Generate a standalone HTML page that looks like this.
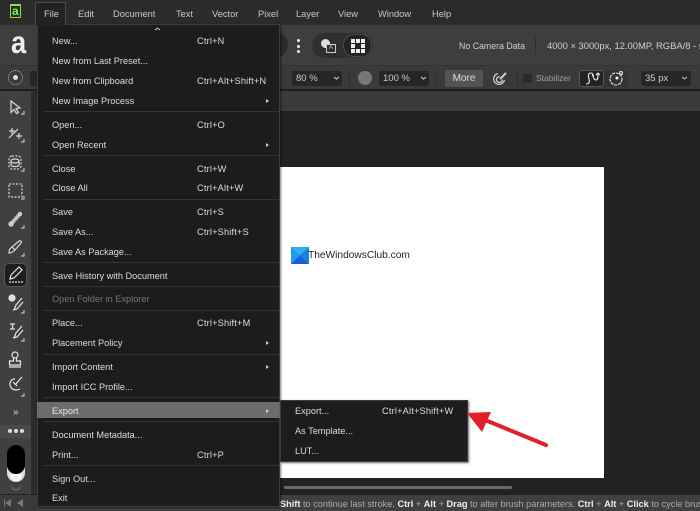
<!DOCTYPE html>
<html><head><meta charset="utf-8">
<style>
html,body{margin:0;padding:0;width:700px;height:511px;overflow:hidden;background:#222;}
body{position:relative;font-family:"Liberation Sans",sans-serif;font-size:9.2px;color:#d8d8d8;}
.a{position:absolute;}
.t{position:absolute;white-space:nowrap;line-height:12px;}
.m{position:absolute;white-space:nowrap;line-height:12px;top:8px;color:#c8c8c8;font-size:9.3px;}
.i{position:absolute;left:52px;white-space:nowrap;line-height:12px;color:#dcdcdc;font-size:9.2px;margin-top:.5px;}
.s{position:absolute;left:197px;white-space:nowrap;line-height:12px;color:#dcdcdc;font-size:9.2px;letter-spacing:.2px;margin-top:.5px;}
.l{position:absolute;left:44px;width:235px;height:1px;background:#333;}
.ar{position:absolute;left:266px;width:0;height:0;border-left:3px solid #ccc;border-top:2.5px solid transparent;border-bottom:2.5px solid transparent;margin-top:1px;}
.dd{position:absolute;background:#262626;border-radius:2px;height:15px;top:71px;color:#ccc;}
.dd span{position:absolute;left:4px;top:2px;line-height:12px;font-size:9.5px;}
svg{position:absolute;overflow:visible;}
.clip{position:absolute;overflow:hidden;white-space:nowrap;line-height:12px;}
</style></head><body>
<!-- bars -->
<div class="a" style="left:0;top:0;width:700px;height:25px;background:#2b2b2b"></div>
<div class="a" style="left:0;top:25px;width:700px;height:40px;background:#3e3e3e"></div>
<div class="a" style="left:0;top:65px;width:700px;height:25px;background:#3a3a3a;border-top:1px solid #333;box-sizing:border-box"></div>
<div class="a" style="left:0;top:89px;width:700px;height:2px;background:#1e1e1e"></div>
<div class="a" style="left:0;top:91px;width:700px;height:20px;background:#3b3b3b"></div>
<div class="a" style="left:0;top:111px;width:700px;height:384px;background:#222"></div>
<div class="a" style="left:0;top:495px;width:700px;height:16px;background:#404040"></div>
<div class="a" style="left:0;top:91px;width:31px;height:404px;background:#404040"></div>
<div class="a" style="left:31px;top:91px;width:7px;height:404px;background:#2c2c2c"></div>
<div class="a" style="left:0;top:494px;width:37px;height:17px;background:#3a3a3a;border-top:1px solid #222;box-sizing:border-box"></div>
<div class="a" style="left:30px;top:71px;width:7px;height:15px;background:#262626;border-radius:2px 0 0 2px"></div>
<!-- logos -->
<div class="a" style="left:10px;top:4px;width:11px;height:14px;background:#8fdc5a;border-radius:1px"></div>
<div class="a" style="left:11px;top:5.500px;width:9px;height:11px;background:#1f3317"></div>
<div class="t" style="left:12px;top:5px;font-size:12px;font-weight:bold;color:#9be565;">a</div>
<div class="a" style="left:11px;top:29px;height:30px;line-height:30px;font-size:26px;font-weight:bold;color:#f0f0f0;transform:scale(1.05,1.2);transform-origin:0 24px;">a</div>
<!-- menu titles -->
<div class="a" style="left:35px;top:2px;width:31px;height:23px;border:1px solid #4a4a4a;border-bottom:none;background:#222;box-sizing:border-box"></div>
<span class="m" style="left:44px">File</span>
<span class="m" style="left:78px">Edit</span>
<span class="m" style="left:113px">Document</span>
<span class="m" style="left:176px">Text</span>
<span class="m" style="left:212px">Vector</span>
<span class="m" style="left:258px">Pixel</span>
<span class="m" style="left:296px">Layer</span>
<span class="m" style="left:338px">View</span>
<span class="m" style="left:378px">Window</span>
<span class="m" style="left:432px">Help</span>
<!-- context toolbar -->
<div class="a" style="left:270px;top:32px;width:18px;height:26px;background:#2a2a2a;border-radius:0 13px 13px 0"></div>
<div class="a" style="left:297px;top:39px;width:3px;height:3px;background:#eee;border-radius:50%"></div>
<div class="a" style="left:297px;top:45px;width:3px;height:3px;background:#eee;border-radius:50%"></div>
<div class="a" style="left:297px;top:50px;width:3px;height:3px;background:#eee;border-radius:50%"></div>
<div class="a" style="left:312px;top:33px;width:61px;height:25px;background:#2f2f2f;border-radius:13px"></div>
<div class="a" style="left:343px;top:34px;width:29px;height:23px;background:#222;border:1px solid #4c4c4c;border-radius:11px;box-sizing:border-box"></div>
<div class="a" style="left:321px;top:39px;width:9px;height:9px;background:#ddd;border-radius:50%"></div>
<div class="a" style="left:326px;top:44px;width:10px;height:9px;background:#2f2f2f;border:1px solid #ccc;box-sizing:border-box;color:#ccc;font-size:6px;line-height:7px;text-align:center">A</div>
<svg style="left:0;top:0" width="700" height="511"><g fill="#eee">
<rect x="351" y="39" width="4" height="4"/><rect x="356" y="39" width="4" height="4"/><rect x="361" y="39" width="4" height="4"/>
<rect x="351" y="44" width="4" height="4"/><rect x="361" y="44" width="4" height="4"/>
<rect x="351" y="49" width="4" height="4"/><rect x="356" y="49" width="4" height="4"/><rect x="361" y="49" width="4" height="4"/></g></svg>
<span class="t" style="left:459px;top:40px;color:#cfcfcf;font-size:8.800px">No Camera Data</span>
<div class="a" style="left:535px;top:37px;width:1px;height:17px;background:#2e2e2e"></div>
<span class="clip" style="left:547px;top:40px;width:153px;color:#cfcfcf;font-size:9.400px">4000 × 3000px, 12.00MP, RGBA/8 - sRGB IEC61966-2.1</span>
<!-- second toolbar -->
<div class="a" style="left:8px;top:70px;width:15px;height:15px;border:1px dotted #bbb;border-radius:50%;box-sizing:border-box"></div>
<div class="a" style="left:13px;top:75px;width:5px;height:5px;background:#ddd;border-radius:50%"></div>
<div class="dd" style="left:292px;width:50px"><span>80 %</span></div>
<div class="a" style="left:349px;top:70px;width:1px;height:17px;background:#2e2e2e"></div>
<div class="a" style="left:358px;top:71px;width:14px;height:14px;background:#777;border-radius:50%"></div>
<div class="dd" style="left:379px;width:50px"><span>100 %</span></div>
<div class="a" style="left:436px;top:70px;width:1px;height:17px;background:#2e2e2e"></div>
<div class="a" style="left:445px;top:70px;width:38px;height:17px;background:#535353;border-radius:2px;text-align:center;line-height:17px;color:#ddd;font-size:10px">More</div>
<svg style="left:0;top:0" width="700" height="511" fill="none" stroke="#ccc" stroke-width="1.300">
<path d="M498 73.500a5.500 5.500 0 1 0 6.500 6.500M499.500 76.500a3 3 0 1 0 3 3"/><path d="M500 79l6-6" stroke-width="2"/></svg>
<div class="a" style="left:517px;top:70px;width:1px;height:17px;background:#2e2e2e"></div>
<div class="a" style="left:523px;top:74px;width:9px;height:9px;background:#2a2a2a"></div>
<span class="t" style="left:536px;top:72px;color:#a0a0a0;font-size:8.500px">Stabilizer</span>
<div class="a" style="left:579px;top:70px;width:25px;height:17px;background:#222;border:1px solid #555;border-radius:3px;box-sizing:border-box"></div>
<div class="a" style="left:604px;top:70px;width:24px;height:17px;background:#333;border-radius:0 3px 3px 0"></div>
<svg style="left:0;top:0" width="700" height="511" fill="none" stroke="#eee" stroke-width="1.100">
<path d="M586 84c3 0 4-2 3-5s-1-6 2-6c2 0 2 2 1 3M593 74c0 3 1 6 3 6 2 0 2-3 2-6M596 75l2-2 2 2"/>
<circle cx="616" cy="79" r="6" stroke-dasharray="3 1"/><circle cx="621" cy="73" r="1.500" fill="#333"/><circle cx="617" cy="78" r="1" fill="#eee"/>
<path d="M334 77l2.500 2 2.500-2M421 77l2.500 2 2.500-2" stroke="#ccc"/></svg>
<div class="dd" style="left:641px;width:50px"><span>35 px</span></div>
<svg style="left:0;top:0" width="700" height="511" fill="none" stroke="#ccc" stroke-width="1">
<path d="M682 77l2.500 2 2.500-2"/></svg>
<!-- left tools -->
<svg style="left:0;top:0" width="36" height="511" fill="none" stroke="#d8d8d8" stroke-width="1.200">
<path d="M11 101l9 7-4 .5 2.500 4-2 1-2.500-4-3 3z"/><path d="M24 111v3h-3M24 139v3h-3M24 168v3h-3M24 196v3h-3M24 225v3h-3M24 253v3h-3M24 310v3h-3M24 338v3h-3M24 393v3h-3" stroke-width="1"/>
<path d="M9 138l9-9M9 131h6M12 128v6M16 136h6M19 133v6"/>
<rect x="9" y="156" width="12" height="13" rx="3" stroke-dasharray="2 1.500"/><ellipse cx="15" cy="161" rx="4" ry="2"/><path d="M11 161v4c0 2 8 2 8 0v-4"/>
<rect x="9" y="184" width="13" height="13" stroke-dasharray="2 1.500"/>
<path d="M10 225l10-11" stroke="#aaa" stroke-width="4"/><path d="M10 225l11-12"/><circle cx="11" cy="224" r="2"/><circle cx="20" cy="214" r="1.500"/>
<path d="M12 247l7-6c2-1 3 1 2 2l-6 7zM12 247c-2 1-3 3-3 6 2 0 4-1 6-3"/>
</svg>
<div class="a" style="left:4px;top:263px;width:23px;height:24px;background:#1d1d1d;border:1px solid #555;border-radius:5px;box-sizing:border-box"></div>
<svg style="left:0;top:0" width="36" height="511" fill="none" stroke="#e6e6e6" stroke-width="1.200">
<path d="M10 279l1-4 8-8 3 3-8 8z"/><path d="M9 282h14" stroke-dasharray="2 1"/>
<circle cx="12" cy="298" r="3" fill="#ddd"/><path d="M14 310l2-5 6-7M13 310l4-1 6-7"/>
<path d="M10 324h5M12.500 324v5M10 329h5M14 338l2-5 6-7M13 338l4-1 6-7"/>
<circle cx="15" cy="355" r="3"/><path d="M13.500 358v3h-4v4h11v-4h-4v-3M9 367h12"/>
<path d="M10 385a5 5 0 0 1 5-6M10 385c1 5 6 6 10 4M15 385l7-8M13 382l4 4"/>
</svg>
<div class="t" style="left:13px;top:407px;color:#ddd;font-size:10px">»</div>
<div class="a" style="left:0;top:425px;width:31px;height:13px;background:#4a4a4a"></div>
<div class="a" style="left:8px;top:429px;width:4px;height:4px;background:#ddd;border-radius:50%"></div>
<div class="a" style="left:14px;top:429px;width:4px;height:4px;background:#ddd;border-radius:50%"></div>
<div class="a" style="left:20px;top:429px;width:4px;height:4px;background:#ddd;border-radius:50%"></div>
<div class="a" style="left:7px;top:460px;width:18px;height:22px;background:#ddd;border-radius:9px"></div>
<div class="a" style="left:7px;top:445px;width:18px;height:29px;background:#000;border-radius:9px"></div>
<div class="a" style="left:10px;top:474px;width:12px;height:7px;background:#f8f8f8;border-radius:0 0 7px 7px"></div>
<svg style="left:0;top:0" width="36" height="511" fill="#777" stroke="none">
<path d="M12 487a4 3 0 0 0 8 0" fill="none" stroke="#777"/>
<path d="M5 503l6-4v8zM4 499h1v8h-1zM17 503l6-4v8z"/></svg>
<!-- canvas doc -->
<div class="a" style="left:280px;top:167px;width:324px;height:311px;background:#fff"></div>
<svg style="left:291px;top:247px" width="18" height="17"><rect width="18" height="17" fill="#1e9bea"/><path d="M0 0l9 8.500L18 0z" fill="#2bb0f0"/><path d="M0 17l9-8.500 9 8.500z" fill="#1560d8"/><path d="M18 0L9 8.500l9 8.500z" fill="#1a82e0"/></svg>
<span class="t" style="left:308px;top:250px;color:#222;font-size:10.200px">TheWindowsClub.com</span>
<div class="a" style="left:284px;top:486px;width:228px;height:3px;background:#6a6a6a;border-radius:2px"></div>
<!-- status -->
<div class="clip" style="left:280px;top:498px;width:420px;color:#a9a9a9;font-size:9.200px"><b style="color:#eee">Shift</b> to continue last stroke. <b style="color:#eee">Ctrl</b> + <b style="color:#eee">Alt</b> + <b style="color:#eee">Drag</b> to alter brush parameters. <b style="color:#eee">Ctrl</b> + <b style="color:#eee">Alt</b> + <b style="color:#eee">Click</b> to cycle brush</div>
<!-- file menu -->
<div class="a" style="left:37px;top:24px;width:243px;height:483px;background:#1c1c1c;border:1px solid #3c3c3c;box-sizing:border-box;box-shadow:1px 1px 2px rgba(0,0,0,.5)"></div>
<div class="a" style="left:36px;top:23px;width:29px;height:3px;background:#222"></div>
<svg style="left:0;top:0" width="280" height="40" fill="none" stroke="#ccc"><path d="M155 30l2.500-2 2.500 2"/></svg>
<span class="i" style="top:34px">New...</span><span class="s" style="top:34px">Ctrl+N</span>
<span class="i" style="top:54px">New from Last Preset...</span>
<span class="i" style="top:74px">New from Clipboard</span><span class="s" style="top:74px">Ctrl+Alt+Shift+N</span>
<span class="i" style="top:94px">New Image Process</span><i class="ar" style="top:98px"></i>
<div class="l" style="top:111px"></div>
<span class="i" style="top:118px">Open...</span><span class="s" style="top:118px">Ctrl+O</span>
<span class="i" style="top:138px">Open Recent</span><i class="ar" style="top:142px"></i>
<div class="l" style="top:155px"></div>
<span class="i" style="top:162px">Close</span><span class="s" style="top:162px">Ctrl+W</span>
<span class="i" style="top:181px">Close All</span><span class="s" style="top:181px">Ctrl+Alt+W</span>
<div class="l" style="top:199px"></div>
<span class="i" style="top:205px">Save</span><span class="s" style="top:205px">Ctrl+S</span>
<span class="i" style="top:225px">Save As...</span><span class="s" style="top:225px">Ctrl+Shift+S</span>
<span class="i" style="top:245px">Save As Package...</span>
<div class="l" style="top:262px"></div>
<span class="i" style="top:269px">Save History with Document</span>
<div class="l" style="top:286px"></div>
<span class="i" style="top:292px;color:#777">Open Folder in Explorer</span>
<div class="l" style="top:310px"></div>
<span class="i" style="top:316px">Place...</span><span class="s" style="top:316px">Ctrl+Shift+M</span>
<span class="i" style="top:336px">Placement Policy</span><i class="ar" style="top:340px"></i>
<div class="l" style="top:354px"></div>
<span class="i" style="top:360px">Import Content</span><i class="ar" style="top:364px"></i>
<span class="i" style="top:380px">Import ICC Profile...</span>
<div class="l" style="top:397px"></div>
<div class="a" style="left:37px;top:402px;width:243px;height:16px;background:#6c6c6c"></div>
<span class="i" style="top:404px;color:#e8e8e8">Export</span><i class="ar" style="top:408px"></i>
<div class="l" style="top:421px"></div>
<span class="i" style="top:428px">Document Metadata...</span>
<span class="i" style="top:448px">Print...</span><span class="s" style="top:448px">Ctrl+P</span>
<div class="l" style="top:465px"></div>
<span class="i" style="top:472px">Sign Out...</span>
<span class="i" style="top:491px">Exit</span>
<!-- submenu -->
<div class="a" style="left:280px;top:400px;width:188px;height:62px;background:#1c1c1c;border:1px solid #3c3c3c;box-sizing:border-box;box-shadow:1px 1px 2px rgba(0,0,0,.6)"></div>
<span class="t" style="left:295px;top:404.500px;color:#dcdcdc;font-size:9.200px">Export...</span>
<span class="t" style="left:382px;top:404.500px;color:#dcdcdc;font-size:9.200px;letter-spacing:.2px">Ctrl+Alt+Shift+W</span>
<span class="t" style="left:295px;top:424.500px;color:#dcdcdc;font-size:9.200px">As Template...</span>
<span class="t" style="left:295px;top:444.500px;color:#dcdcdc;font-size:9.200px">LUT...</span>
<!-- arrow -->
<svg style="left:0;top:0" width="700" height="511">
<path d="M546 445L485 420" stroke="#e3202a" stroke-width="4" stroke-linecap="round" fill="none"/>
<path d="M467 413L491 412L482 432z" fill="#e3202a"/></svg>
</body></html>
